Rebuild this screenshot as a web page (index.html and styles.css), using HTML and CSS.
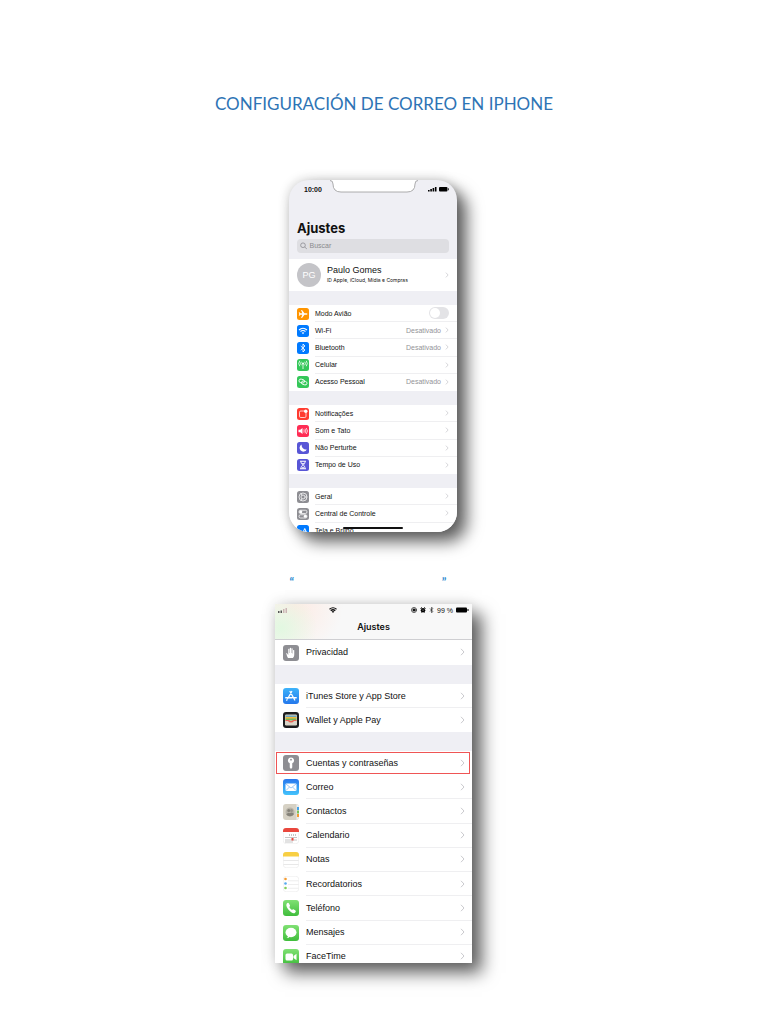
FILE: index.html
```html
<!DOCTYPE html>
<html lang="es">
<head>
<meta charset="utf-8">
<meta name="viewport" content="width=device-width, initial-scale=1">
<title>Configuración de correo en iPhone</title>
<link rel="stylesheet" href="styles.css">
</head>
<body>
<main class="page">
  <h1 class="title">CONFIGURACIÓN DE CORREO EN IPHONE</h1>

  <section class="phone phone-notched" aria-label="Ajustes">
    <svg class="notch" viewBox="0 0 88 13" aria-hidden="true"><path d="M0 0Q3 0 3 4Q3 12 11 12H77Q85 12 85 4Q85 0 88 0Z" fill="#fff"/><path d="M0 .5Q3 .5 3 4Q3 12 11 12H77Q85 12 85 4Q85 .5 88 .5" fill="none" stroke="#999" stroke-width=".8"/></svg>
    <div class="status">
      <span>10:00</span>
      <svg width="21" height="6" viewBox="0 0 21 6" aria-hidden="true"><path d="M0 4h1.6v1.5H0zM2.3 3h1.6v2.500H2.300zM4.600 2h1.600v3.500H4.600zM6.900 1h1.600v4.500H6.900z"/><rect x="11" y="1" width="8.500" height="4.500" rx="1"/><path d="M20 2.300h.7v2H20z"/></svg>
    </div>
    <h2 class="big-heading">Ajustes</h2>
    <label class="search">
      <svg width="8" height="8" viewBox="0 0 8 8" fill="none" stroke="#86868b" stroke-width=".8" aria-hidden="true"><circle cx="3.200" cy="3.200" r="2.500"/><path d="M5 5l2.500 2.500"/></svg>
      <input type="search" placeholder="Buscar" aria-label="Buscar">
    </label>
    <a class="profile" href="#perfil">
      <span class="avatar">PG</span>
      <span class="who"><span class="name">Paulo Gomes</span><span class="sub">ID Apple, iCloud, Mídia e Compras</span></span>
      <svg class="chev" viewBox="0 0 4 7"><path d="M.7.7l2.600 2.800L.7 6.300"/></svg>
    </a>
    <div class="group five">
      <div class="row"><svg class="icon" viewBox="0 0 24 24"><rect width="24" height="24" rx="5" fill="#ff9500"/><path fill="#fff" d="M21 12c0-1-1.200-1.600-3-1.600h-3L10 4H8.200l2.300 6.400H6.700L5 8.300H3.500L4.600 12l-1.100 3.700H5l1.700-2.100h3.800L8.200 20H10l5-6.400h3c1.800 0 3-.6 3-1.600z"/></svg>
        <span class="cell"><label for="avion">Modo Avião</label><input id="avion" class="switch" type="checkbox" role="switch"></span></div>
      <a class="row" href="#wifi"><svg class="icon" viewBox="0 0 24 24"><rect width="24" height="24" rx="5" fill="#007aff"/><path d="M4 10q8-7 16 0M7 13q5-4 10 0" fill="none" stroke="#fff" stroke-width="2.300"/><path fill="#fff" d="M9.500 15.500q2.500-2 5 0L12 18.500z"/></svg>
        <span class="cell"><span>Wi-Fi</span><span class="value">Desativado</span><svg class="chev" viewBox="0 0 4 7"><path d="M.7.7l2.600 2.800L.7 6.300"/></svg></span></a>
      <a class="row" href="#bluetooth"><svg class="icon" viewBox="0 0 24 24"><rect width="24" height="24" rx="5" fill="#007aff"/><path d="M7.500 8l8.500 8-4 4V4l4 4-8.500 8" fill="none" stroke="#fff" stroke-width="1.700"/></svg>
        <span class="cell"><span>Bluetooth</span><span class="value">Desativado</span><svg class="chev" viewBox="0 0 4 7"><path d="M.7.7l2.600 2.800L.7 6.300"/></svg></span></a>
      <a class="row" href="#celular"><svg class="icon" viewBox="0 0 24 24"><rect width="24" height="24" rx="5" fill="#34c759"/><path d="M12 9v11M8.500 12.500q-2.500-3.500 0-7M15.500 12.500q2.500-3.500 0-7M5.500 14.500q-4-5.500 0-11M18.500 14.500q4-5.500 0-11" fill="none" stroke="#fff" stroke-width="1.600"/><circle cx="12" cy="9" r="2" fill="#fff"/></svg>
        <span class="cell"><span>Celular</span><svg class="chev" viewBox="0 0 4 7"><path d="M.7.7l2.600 2.800L.7 6.300"/></svg></span></a>
      <a class="row" href="#acesso"><svg class="icon" viewBox="0 0 24 24"><rect width="24" height="24" rx="5" fill="#34c759"/><g fill="none" stroke="#fff" stroke-width="1.700"><rect x="4" y="6.500" width="11" height="7" rx="3.500" transform="rotate(15 9 10)"/><rect x="9" y="10.500" width="11" height="7" rx="3.500" transform="rotate(15 15 14)"/></g></svg>
        <span class="cell"><span>Acesso Pessoal</span><span class="value">Desativado</span><svg class="chev" viewBox="0 0 4 7"><path d="M.7.7l2.600 2.800L.7 6.300"/></svg></span></a>
    </div>
    <div class="group four">
      <a class="row" href="#notificacoes"><svg class="icon" viewBox="0 0 24 24"><rect width="24" height="24" rx="5" fill="#ff3b30"/><rect x="5" y="6" width="13" height="13" rx="2.500" fill="none" stroke="#fff" stroke-width="1.500"/><circle cx="17.500" cy="6.500" r="3.500" fill="#fff"/></svg>
        <span class="cell"><span>Notificações</span><svg class="chev" viewBox="0 0 4 7"><path d="M.7.7l2.600 2.800L.7 6.300"/></svg></span></a>
      <a class="row" href="#som"><svg class="icon" viewBox="0 0 24 24"><rect width="24" height="24" rx="5" fill="#ff2d55"/><path fill="#fff" d="M3 9.500h3.500L11 6v12l-4.500-3.500H3z"/><path d="M13.500 9q2 3 0 6M16 7.500q3.500 4.500 0 9M18.500 6q5 6 0 12" fill="none" stroke="#fff" stroke-width="1.500"/></svg>
        <span class="cell"><span>Som e Tato</span><svg class="chev" viewBox="0 0 4 7"><path d="M.7.7l2.600 2.800L.7 6.300"/></svg></span></a>
      <a class="row" href="#perturbe"><svg class="icon" viewBox="0 0 24 24"><rect width="24" height="24" rx="5" fill="#5856d6"/><path fill="#fff" d="M9.500 5a7.500 7.500 0 1 0 10 10A8.500 8.500 0 0 1 9.500 5z"/></svg>
        <span class="cell"><span>Não Perturbe</span><svg class="chev" viewBox="0 0 4 7"><path d="M.7.7l2.600 2.800L.7 6.300"/></svg></span></a>
      <a class="row" href="#tempo"><svg class="icon" viewBox="0 0 24 24"><rect width="24" height="24" rx="5" fill="#5856d6"/><path d="M6 4.500h12M6 19.500h12M8 5c0 4 1.500 5 3.500 7C9.500 14 8 15 8 19M16 5c0 4-1.500 5-3.500 7 2 2 3.500 3 3.500 7" fill="none" stroke="#fff" stroke-width="2"/><path fill="#fff" d="M9.500 8h5L12 11zM9 19l3-4 3 4z"/></svg>
        <span class="cell"><span>Tempo de Uso</span><svg class="chev" viewBox="0 0 4 7"><path d="M.7.7l2.600 2.800L.7 6.300"/></svg></span></a>
    </div>
    <div class="group three">
      <a class="row" href="#geral"><svg class="icon" viewBox="0 0 24 24"><rect width="24" height="24" rx="5" fill="#8e8e93"/><g fill="none" stroke="#fff" stroke-width="1.500"><circle cx="12" cy="12" r="8"/><circle cx="12" cy="12" r="4"/><path d="M16 12h4M10 8.500L8 5M10 15.500L8 19"/></g></svg>
        <span class="cell"><span>Geral</span><svg class="chev" viewBox="0 0 4 7"><path d="M.7.7l2.600 2.800L.7 6.300"/></svg></span></a>
      <a class="row" href="#central"><svg class="icon" viewBox="0 0 24 24"><rect width="24" height="24" rx="5" fill="#8e8e93"/><g fill="none" stroke="#fff" stroke-width="1.500"><rect x="4" y="4.500" width="16" height="6.500" rx="3.200"/><rect x="4" y="13.500" width="16" height="6.500" rx="3.200"/></g><circle cx="7.500" cy="7.700" r="3" fill="#fff"/><circle cx="16.500" cy="16.700" r="3" fill="#fff"/></svg>
        <span class="cell"><span>Central de Controle</span><svg class="chev" viewBox="0 0 4 7"><path d="M.7.7l2.600 2.800L.7 6.300"/></svg></span></a>
      <a class="row" href="#tela"><svg class="icon" viewBox="0 0 24 24"><rect width="24" height="24" rx="5" fill="#007aff"/><path d="M3 17l3-6 3 6M4.500 15h3M11 17l4.500-10L20 17M12.500 13.500h6" fill="none" stroke="#fff" stroke-width="2"/></svg>
        <span class="cell"><span>Tela e Brilho</span></span></a>
    </div>
    <span class="home-bar"></span>
  </section>

  <p class="quote"><span>“</span><span>”</span></p>

  <section class="phone phone-plain" aria-label="Ajustes de cuentas">
    <header class="nav">
      <div class="status2">
        <svg width="10" height="6" viewBox="0 0 10 6" aria-hidden="true"><path fill="#555" d="M0 4h1.500v2H0zM2.500 3.500H4V6H2.500z"/><path fill="#ccb5b5" d="M5 2h1.500v4H5zM7.500 1H9v5H7.500z"/></svg>
        <svg width="8" height="6" viewBox="0 0 16 12" aria-hidden="true"><path d="M1 4.500q7-6 14 0M3.500 7.500q4.500-4 9 0" fill="none" stroke="#111" stroke-width="2.400"/><path d="M5.500 9q2.500-2 5 0L8 12z"/></svg>
        <span class="right">
          <svg width="6" height="6" viewBox="0 0 12 12" aria-hidden="true"><circle cx="6" cy="6" r="5" fill="none" stroke="#222" stroke-width="1.500"/><path d="M4 4h4v4H4zM8 6h4" stroke="#222" stroke-width="1.500"/></svg>
          <svg width="6" height="6" viewBox="0 0 12 12" aria-hidden="true"><circle cx="6" cy="6.500" r="4.500"/><path d="M1 3l3-2M11 3L8 1M3 11l-1 1M9 11l1 1" stroke="#111" stroke-width="2"/><path d="M4 5l2 2 2-2" fill="none" stroke="#fff"/></svg>
          <svg width="5" height="6" viewBox="0 0 10 12" aria-hidden="true"><path d="M2 3l6 6-3 2.500V.5L8 3 2 9" fill="none" stroke="#222" stroke-width="1.300"/></svg>
          <span>99 %</span>
          <svg width="13" height="6" viewBox="0 0 13 6" aria-hidden="true"><rect y=".5" width="11" height="5" rx="1"/><path d="M11.500 2h1v2h-1z"/></svg>
        </span>
      </div>
      <h2 class="nav-title">Ajustes</h2>
    </header>
    <div class="group one">
      <a class="row" href="#privacidad"><svg class="icon" viewBox="0 0 32 32"><rect width="32" height="32" rx="6" fill="#8e8e93"/><path fill="#fff" d="M10 26c-2-3-3-7-3.500-10q1.500-1 2.500 2l1.500 2V8q1.200-1.500 2.300 0v8h.8V6q1.200-1.500 2.400 0v10h.8V7q1.200-1.500 2.400 0v10h.8v-6.500q1.200-1.500 2.500 0V19c0 4-1.500 5-2.500 7z"/></svg><span class="cell"><span>Privacidad</span><svg class="chev" viewBox="0 0 4 7"><path d="M.7.7l2.600 2.800L.7 6.300"/></svg></span></a>
    </div>
    <div class="group two">
      <a class="row" href="#itunes"><svg class="icon" viewBox="0 0 32 32"><defs><linearGradient id="blue" x2="0" y2="1"><stop stop-color="#3db3fa"/><stop offset="1" stop-color="#2478ec"/></linearGradient></defs><rect width="32" height="32" rx="6" fill="url(#blue)"/><path d="M17.500 7L9.500 21M14 7l9.500 17M5.500 19.500h13M22.500 19.500h4M8 23.500l-.5 1" fill="none" stroke="#fff" stroke-width="2.600" stroke-linecap="round"/></svg><span class="cell"><span>iTunes Store y App Store</span><svg class="chev" viewBox="0 0 4 7"><path d="M.7.7l2.600 2.800L.7 6.300"/></svg></span></a>
      <a class="row" href="#wallet"><svg class="icon" viewBox="0 0 32 32"><rect width="32" height="32" rx="6" fill="#1c1c1e"/><rect x="4" y="5" width="24" height="22" rx="2.500" fill="#d9d5c8"/><path d="M5 7h22v4H5z" fill="#6aa5bd"/><path d="M5 10h22v4H5z" fill="#eeb83e"/><path d="M5 13h22v4H5z" fill="#75b65b"/><path d="M5 16h6q2 0 3 2h4q1-2 3-2h6v2h-5q-2 3-6 3t-6-3H5z" fill="#ec6053"/></svg><span class="cell"><span>Wallet y Apple Pay</span><svg class="chev" viewBox="0 0 4 7"><path d="M.7.7l2.600 2.800L.7 6.300"/></svg></span></a>
    </div>
    <div class="group nine">
      <a class="row marked" href="#cuentas"><svg class="icon" viewBox="0 0 32 32"><rect width="32" height="32" rx="6" fill="#8e8e93"/><path fill="#fff" fill-rule="evenodd" d="M16 5a6 6 0 0 1 2.500 11.500V25L16 28l-2.500-3v-8.500A6 6 0 0 1 16 5zm0 2.500a1.800 1.800 0 1 0 0 3.600 1.800 1.800 0 0 0 0-3.600z"/></svg><span class="cell"><span>Cuentas y contraseñas</span><svg class="chev" viewBox="0 0 4 7"><path d="M.7.7l2.600 2.800L.7 6.300"/></svg></span></a>
      <a class="row" href="#correo"><svg class="icon" viewBox="0 0 32 32"><defs><linearGradient id="mail" x2="0" y2="1"><stop stop-color="#2877ee"/><stop offset="1" stop-color="#43c3fb"/></linearGradient></defs><rect width="32" height="32" rx="6" fill="url(#mail)"/><rect x="5" y="9" width="22" height="15" rx="2" fill="#fff"/><path d="M6 10l10 8 10-8M6 23l7-7M26 23l-7-7" fill="none" stroke="#5aa5f0" stroke-width="1.200"/></svg><span class="cell"><span>Correo</span><svg class="chev" viewBox="0 0 4 7"><path d="M.7.7l2.600 2.800L.7 6.300"/></svg></span></a>
      <a class="row" href="#contactos"><svg class="icon" viewBox="0 0 32 32"><rect width="32" height="32" rx="6" fill="#d6d1c4"/><path d="M27 0q5 1 5 6v20q0 5-5 6z" fill="#eee"/><path d="M28 6h4v6h-4z" fill="#44a2e8"/><path d="M28 13h4v6h-4z" fill="#76c258"/><path d="M28 20h4v6h-4z" fill="#f49b31"/><circle cx="14" cy="16" r="9" fill="#b8b4a9"/><circle cx="11.500" cy="13" r="3" fill="#858278"/><circle cx="17" cy="13" r="3" fill="#98958b"/><path d="M6.500 21q5-7 10 0v3q-6 2-10-3zM14 18q5-3 8 2-2 3-5 4z" fill="#858278"/></svg><span class="cell"><span>Contactos</span><svg class="chev" viewBox="0 0 4 7"><path d="M.7.7l2.600 2.800L.7 6.300"/></svg></span></a>
      <a class="row" href="#calendario"><svg class="icon" viewBox="0 0 32 32"><rect x=".5" y=".5" width="31" height="31" rx="6" fill="#fff" stroke="#e5e5e5"/><path d="M0 8V6q0-6 6-6h20q6 0 6 6v2z" fill="#e9473d"/><path d="M12 14h16M5 19h23M5 24h23M5 28h14" stroke="#8c8c8c" stroke-width="2" stroke-dasharray="2 2"/><path d="M17 20h4v5h-4z" fill="#e9473d"/></svg><span class="cell"><span>Calendario</span><svg class="chev" viewBox="0 0 4 7"><path d="M.7.7l2.600 2.800L.7 6.300"/></svg></span></a>
      <a class="row" href="#notas"><svg class="icon" viewBox="0 0 32 32"><rect x=".5" y=".5" width="31" height="31" rx="6" fill="#fff" stroke="#e5e5e5"/><path d="M0 9V6q0-6 6-6h20q6 0 6 6v3z" fill="#f8cf43"/><path d="M1 17h30M1 25h30" stroke="#d8d8d8" stroke-width="1.200"/></svg><span class="cell"><span>Notas</span><svg class="chev" viewBox="0 0 4 7"><path d="M.7.7l2.600 2.800L.7 6.300"/></svg></span></a>
      <a class="row" href="#recordatorios"><svg class="icon" viewBox="0 0 32 32"><rect x=".5" y=".5" width="31" height="31" rx="6" fill="#fff" stroke="#e5e5e5"/><path d="M10 9.500h21M10 17h21M10 24.500h21" stroke="#ddd"/><circle cx="5" cy="6" r="2.600" fill="#f49b31"/><circle cx="5" cy="15" r="2.600" fill="#55a9ee"/><circle cx="5" cy="24" r="2.600" fill="#83cf5b"/></svg><span class="cell"><span>Recordatorios</span><svg class="chev" viewBox="0 0 4 7"><path d="M.7.7l2.600 2.800L.7 6.300"/></svg></span></a>
      <a class="row" href="#telefono"><svg class="icon" viewBox="0 0 32 32"><defs><linearGradient id="green" x2="0" y2="1"><stop stop-color="#80e174"/><stop offset="1" stop-color="#40bd3c"/></linearGradient></defs><rect width="32" height="32" rx="6" fill="url(#green)"/><path fill="#fff" d="M7 8q3-4 5-1l2 4q.5 1.500-1.500 3 2 4 5.500 6 1.500-2.200 3-1.500l4 2.500q2 1.500-1 4.500-3.500 3-10-3Q5 14 7 8z"/></svg><span class="cell"><span>Teléfono</span><svg class="chev" viewBox="0 0 4 7"><path d="M.7.7l2.600 2.800L.7 6.300"/></svg></span></a>
      <a class="row" href="#mensajes"><svg class="icon" viewBox="0 0 32 32"><rect width="32" height="32" rx="6" fill="url(#green)"/><ellipse cx="16" cy="15" rx="11" ry="9.500" fill="#fff"/><path d="M10 21q0 4-3 5 5 0 7-3z" fill="#fff"/></svg><span class="cell"><span>Mensajes</span><svg class="chev" viewBox="0 0 4 7"><path d="M.7.7l2.600 2.800L.7 6.300"/></svg></span></a>
      <a class="row" href="#facetime"><svg class="icon" viewBox="0 0 32 32"><rect width="32" height="32" rx="6" fill="url(#green)"/><rect x="5" y="9" width="15" height="14" rx="3" fill="#fff"/><path d="M21 14l6-4.500v13L21 18z" fill="#fff"/></svg><span class="cell"><span>FaceTime</span><svg class="chev" viewBox="0 0 4 7"><path d="M.7.7l2.600 2.800L.7 6.300"/></svg></span></a>
    </div>
  </section>
</main>
</body>
</html>
```
FILE: styles.css
```css
* { box-sizing: border-box; }

body {
  margin: 0;
  background: #fff;
  color: #111;
  font-family: "Liberation Sans", Arial, sans-serif;
}

.page {
  display: flex;
  flex-direction: column;
  align-items: center;
  padding: 92px 16px 40px;
}

.title {
  margin: 0 0 64px;
  color: #2e74b5;
  font: 400 17px/24px Lato, "Open Sans", sans-serif;
}

h2 { margin: 0; }
a { color: inherit; text-decoration: none; }

.phone {
  position: relative;
  display: flex;
  flex-direction: column;
  overflow: hidden;
  background: #efeff4;
}

.phone > * { flex-shrink: 0; }

.phone-notched {
  width: 168px;
  max-height: 352px;
  margin-right: 22px;
  border-radius: 20px;
  font-size: 7px;
  box-shadow: 10px 10px 16px rgba(0, 0, 0, .6), 0 0 12px rgba(0, 0, 0, .2);
}

.notch {
  position: absolute;
  top: 0;
  left: 41px;
  width: 88px;
  height: 13px;
}

.status {
  display: flex;
  justify-content: space-between;
  align-items: center;
  height: 18px;
  padding: 0 8px 0 15px;
  font-weight: 700;
}

.big-heading {
  margin-top: 20px;
  padding-left: 8px;
  font-family: Inter, sans-serif;
  font-size: 13px;
  line-height: 20px;
  font-weight: 700;
}

.search {
  display: flex;
  align-items: center;
  gap: 2px;
  height: 14px;
  margin: 1px 8px 6px;
  padding: 0 3px;
  border-radius: 4px;
  background: #dedee2;
}

.search input {
  width: 100%;
  min-width: 0;
  padding: 0;
  border: 0;
  background: none;
  color: #8a8a8e;
  font: 7px/10px "Liberation Sans", sans-serif;
}

.search input::placeholder { color: #8a8a8e; opacity: 1; }

.profile {
  display: flex;
  align-items: center;
  gap: 6px;
  height: 32px;
  padding: 0 8px;
  background: #fff;
}

.avatar {
  width: 24px;
  height: 24px;
  border-radius: 50%;
  background: #c4c4c8;
  color: #fff;
  font-size: 9px;
  line-height: 24px;
  text-align: center;
}

.who { display: flex; flex-direction: column; flex: 1; white-space: nowrap; }
.name { font-size: 9px; line-height: 11px; }
.sub { font-family: Inter, sans-serif; font-size: 5px; line-height: 9px; }

.group {
  display: grid;
  grid-auto-rows: 1fr;
  background: #fff;
}

.phone-notched .group { margin-top: 14px; }
.five { min-height: 86px; }
.four { min-height: 69px; }
.three { min-height: 52px; }

.row { display: flex; align-items: center; gap: 6px; padding-left: 8px; }
.icon { flex: none; width: 12px; height: 12px; }

.cell {
  display: flex;
  align-items: center;
  gap: 4px;
  flex: 1;
  height: 100%;
  padding-right: 8px;
  border-bottom: 1px solid #efeff1;
  white-space: nowrap;
}

.row:last-child .cell { border-color: transparent; }
.value { margin-left: auto; color: #939398; }

.chev {
  flex: none;
  width: 4px;
  height: 6px;
  margin-left: auto;
  fill: none;
  stroke: #bcbcc1;
  stroke-width: .7;
}

.value + .chev { margin-left: 0; }

.switch {
  appearance: none;
  width: 20px;
  height: 12px;
  margin: 0 0 0 auto;
  border-radius: 6px;
  background: #e3e3e6;
}

.switch::before {
  content: "";
  display: block;
  width: 10px;
  height: 10px;
  margin: 1px;
  border-radius: 50%;
  background: #fff;
}

.home-bar {
  position: absolute;
  bottom: 3px;
  left: 54px;
  width: 60px;
  height: 2px;
  border-radius: 1px;
  background: #111;
}

.quote {
  display: flex;
  justify-content: space-between;
  width: 157px;
  margin: 40px 32px 12px 0;
  color: #2e8bd0;
  font: 700 12px/20px Lato, sans-serif;
}

.phone-plain {
  width: 197px;
  max-height: 359px;
  margin-right: 21px;
  font-size: 9px;
  box-shadow: 10px 10px 16px rgba(0, 0, 0, .6), 0 0 14px rgba(0, 0, 0, .14);
}

.nav {
  height: 36px;
  border-bottom: 1px solid #cfcfd2;
  background: radial-gradient(circle at 6px 24px, #e2f8e1, transparent 36px), radial-gradient(circle at 20px 2px, #fdebe4, transparent 48px), #f8f8f8;
}

.status2 {
  display: grid;
  grid-template-columns: 51px 1fr auto;
  align-items: center;
  height: 12px;
  padding: 0 3px;
  font-size: 7px;
}

.right { display: flex; align-items: center; gap: 3px; }

.nav-title {
  font-family: Inter, sans-serif;
  font-size: 9px;
  line-height: 22px;
  font-weight: 600;
  text-align: center;
}

.one { min-height: 25px; }
.two { min-height: 48px; margin-top: 19px; }
.nine { min-height: 218px; margin-top: 19px; }

.phone-plain .row { gap: 7px; }
.phone-plain .icon { width: 16px; height: 16px; }
.phone-plain .cell { padding-right: 7px; }
.phone-plain .chev { width: 5px; height: 8px; }

.marked {
  outline: 1px solid #ef5555;
  outline-offset: -1px;
  margin: 1px 2px 1px 1px;
}

.phone-plain .marked { padding-left: 7px; }
.phone-plain .marked .cell { padding-right: 5px; border-color: transparent; }
```
